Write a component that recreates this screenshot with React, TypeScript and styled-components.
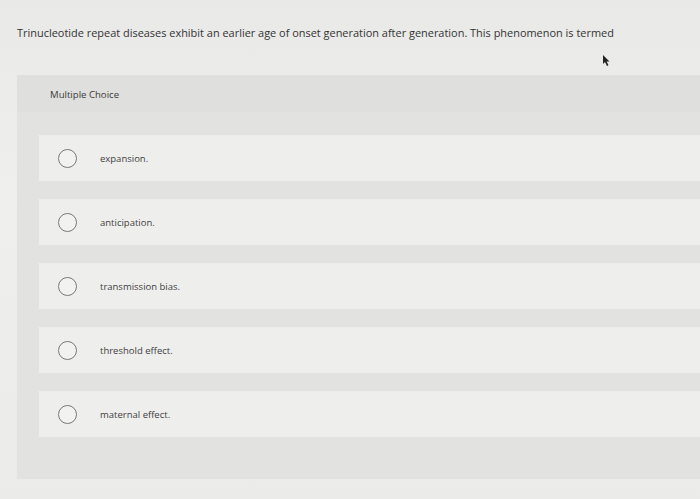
import React from "react";
import styled, { createGlobalStyle } from "styled-components";

const Global = createGlobalStyle`
  html, body { margin: 0; padding: 0; }
  body {
    background: #ececeb;
    font-family: "Open Sans", "Liberation Sans", Arial, sans-serif;
    color: #3a3a3a;
    width: 700px;
    height: 499px;
    overflow: hidden;
  }
`;

const Page = styled.div`
  position: relative;
  width: 700px;
  height: 499px;
  padding-top: 25px;
  box-sizing: border-box;
  background: linear-gradient(180deg, #e9e9e8 0%, #efefee 40%, #ebebea 100%);
`;

const Question = styled.p`
  margin: 0 0 0 17px;
  font-size: 10.95px;
  line-height: 16px;
  color: #333;
`;

const Panel = styled.section`
  margin: 34px 0 0 17px;
  background: #e2e2e1;
  padding-bottom: 42px;
`;

const Header = styled.div`
  height: 37px;
  display: flex;
  align-items: center;
  padding-left: 33px;
  background: #dfdfde;
  font-size: 9.6px;
  color: #3c3c3c;
  padding-top: 2px;
  box-sizing: border-box;
`;

const Options = styled.div`
  display: flex;
  flex-direction: column;
  gap: 18px;
  margin-top: 23px;
  margin-left: 22px;
`;

const Row = styled.label`
  height: 46px;
  display: flex;
  align-items: center;
  padding-left: 19px;
  background: #eeeeed;
  cursor: pointer;
`;

const Radio = styled.span`
  width: 17px;
  height: 17px;
  border: 1.6px solid #787878;
  border-radius: 50%;
  background: #f2f2f1;
  flex: none;
`;

const OptionText = styled.span`
  margin-left: 23px;
  font-size: 9.5px;
  color: #3f3f3f;
`;

const Cursor = styled.svg`
  position: absolute;
  left: 602px;
  top: 55px;
`;

const options = [
  "expansion.",
  "anticipation.",
  "transmission bias.",
  "threshold effect.",
  "maternal effect.",
];

export default function App() {
  return (
    <>
      <Global />
      <Page>
        <Question>
          Trinucleotide repeat diseases exhibit an earlier age of onset generation after generation. This phenomenon is termed
        </Question>
        <Panel>
          <Header>Multiple Choice</Header>
          <Options>
            {options.map((o) => (
              <Row key={o}>
                <Radio />
                <OptionText>{o}</OptionText>
              </Row>
            ))}
          </Options>
        </Panel>
        <Cursor width="8" height="12" viewBox="0 0 8 12">
          <path d="M1 0 L1 9 L3 7 L5 11 L6.5 10.3 L4.6 6.5 L7.5 6.5 Z" fill="#222" />
        </Cursor>
      </Page>
    </>
  );
}
